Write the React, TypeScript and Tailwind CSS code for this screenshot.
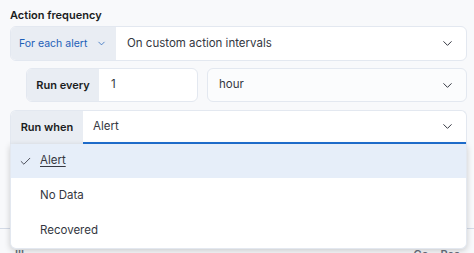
import { Check, ChevronDown } from 'lucide-react'

function Chevron({ className }: { className?: string }) {
  return <ChevronDown className={className} strokeWidth={1.6} />
}

export default function App() {
  return (
    <div className="relative w-[474px] h-[253px] overflow-hidden bg-[#f8f9fb] font-['Inter','Noto_Sans',sans-serif] text-[#343741]">
      <div className="pl-[10px] pr-[7px] pt-[8px]">
        <div className="text-[11px] leading-[14px] font-semibold text-[#1a1c21]">Action frequency</div>

        {/* frequency */}
        <div className="mt-[4px] flex h-[35px] rounded-[6px] border border-[#e3e8f0] overflow-hidden bg-white">
          <div className="flex shrink-0 items-center gap-[9px] w-[105px] pl-[8px] bg-[#e9edf3] text-[10.5px] whitespace-nowrap text-[#1d5fb8]">
            For each alert
            <Chevron className="w-[11px] h-[11px] text-[#1d5fb8]" />
          </div>
          <div className="flex flex-1 items-center justify-between pl-[11px] pr-[11px] text-[11.5px] text-[#343741]">
            On custom action intervals
            <Chevron className="w-[15px] h-[15px] text-[#343741]" />
          </div>
        </div>

        {/* run every */}
        <div className="mt-[7px] ml-[16px] flex gap-[9px] h-[34px]">
          <div className="flex w-[172px] rounded-[6px] border border-[#e3e8f0] overflow-hidden bg-white">
            <div className="flex shrink-0 items-center justify-center w-[72px] bg-[#e9edf3] text-[11px] font-semibold text-[#1a1c21]">Run every</div>
            <div className="flex items-center pl-[12px] text-[11.5px]">1</div>
          </div>
          <div className="flex flex-1 items-center justify-between rounded-[6px] border border-[#e3e8f0] bg-[#fbfcfd] pl-[11px] pr-[11px] text-[11.5px]">
            hour
            <Chevron className="w-[15px] h-[15px] text-[#343741]" />
          </div>
        </div>

        {/* run when */}
        <div className="mt-[8px] flex h-[34px] rounded-t-[6px] border border-b-0 border-[#e3e8f0] overflow-hidden bg-white">
          <div className="flex shrink-0 items-center justify-center w-[72px] bg-[#e9edf3] text-[11px] font-semibold text-[#1a1c21]">Run when</div>
          <div className="flex flex-1 items-center justify-between pl-[10px] pr-[11px] text-[11.5px] border-b-2 border-[#1f6fd0]">
            Alert
            <Chevron className="w-[15px] h-[15px] text-[#343741]" />
          </div>
        </div>

        {/* content underneath the menu */}
        <div className="h-[84px]" />
      </div>
      <div className="border-t border-[#d3dae6] flex items-start justify-between pt-[19px] pl-[15px] pr-[14px] text-[11px] leading-[12px] font-semibold text-[#69707d]">
        <span>III</span>
        <span className="flex gap-[12px]"><span>Co</span><span>Res</span></span>
      </div>

      {/* dropdown */}
      <div className="absolute left-[10px] top-[144px] w-[457px] h-[105px] rounded-b-[6px] bg-white shadow-[0_2px_6px_rgba(0,0,0,0.18)] border border-t-0 border-[#e3e8f0] text-[11.5px] text-[#343741]">
        <div className="flex items-center h-[34px] bg-[#e6eef9] pl-[8px]">
          <Check className="w-[13px] h-[13px] text-[#343741]" strokeWidth={1.6} />
          <span className="ml-[8px] underline underline-offset-2">Alert</span>
        </div>
        <div className="flex items-center h-[35px] pl-[29px]">No Data</div>
        <div className="flex items-center h-[35px] pl-[29px]">Recovered</div>
      </div>
    </div>
  )
}
